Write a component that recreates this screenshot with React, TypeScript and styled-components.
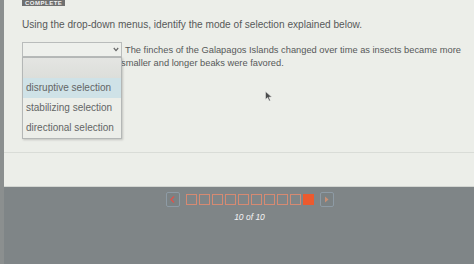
import * as React from 'react'
import styled, { createGlobalStyle } from 'styled-components'

const GlobalStyle = createGlobalStyle`
  html, body {
    margin: 0;
    padding: 0;
    background: #7f8587;
  }
  body {
    font-family: 'Liberation Sans', Arial, sans-serif;
  }
`

const Page = styled('div')`
  display: flex;
  flex-flow: column;
  width: 474px;
  height: 264px;
  overflow: hidden;
  background: #7f8587;
  border-left: 4px solid #8b8f8f;
  box-sizing: border-box;
  position: relative;
`

const Panel = styled('section')`
  display: flex;
  flex-flow: column;
  height: 186px;
  background: #eceee9;
  box-shadow: 0 1px 0 #d3d6d2;
  overflow: hidden;
`

const Content = styled('div')`
  display: flex;
  flex-flow: column;
  align-items: flex-start;
  padding-left: 18px;
  color: #575959;
`

const Badge = styled('div')`
  display: flex;
  align-items: flex-end;
  width: max-content;
  height: 7px;
  margin-top: -1px;
  padding: 0 3px;
  background: #6f7070;
  color: #f2f2f2;
  font-size: 6px;
  font-weight: bold;
  letter-spacing: 0.5px;
  line-height: 6px;
  overflow: hidden;
`

const Instruction = styled('p')`
  margin: 13px 0 0;
  font-size: 10.1px;
  line-height: 12px;
`

const QuestionRow = styled('div')`
  display: flex;
  align-items: flex-start;
  margin-top: 11px;
`

const SelectWrap = styled('div')`
  position: relative;
  flex: 0 0 auto;
  z-index: 2;
`

const SelectBox = styled('div')`
  display: flex;
  align-items: center;
  justify-content: flex-end;
  width: 100px;
  height: 15px;
  box-sizing: border-box;
  padding-right: 2px;
  border: 1px solid #b9bcbb;
  background: #eef0ec;
  color: #666;
`

const OptionList = styled('ul')`
  position: absolute;
  top: 100%;
  left: 0;
  width: 100px;
  margin: 0;
  padding: 0;
  list-style: none;
  box-sizing: border-box;
  border: 1px solid #b4b7b6;
  background: #eceee9;
  box-shadow: 1px 1px 2px rgba(0, 0, 0, 0.18);
`

const Option = styled('li')<{ $active?: boolean; $blank?: boolean }>`
  height: 20px;
  padding-left: 3px;
  font-size: 10px;
  line-height: 20px;
  color: #636565;
  white-space: nowrap;
  background: ${p =>
    p.$active
      ? '#cfe2e7'
      : p.$blank
      ? 'linear-gradient(#e4e5e2, #dcdeda)'
      : 'transparent'};
`

const Prompt = styled('p')`
  margin: 0 0 0 -1px;
  padding-top: 2px;
  font-size: 9.3px;
  line-height: 13px;
  text-indent: 4px;
`

const Divider = styled('div')`
  margin-top: auto;
  margin-bottom: 33px;
  height: 1px;
  background: #d9dcd7;
`

const Footer = styled('footer')`
  display: flex;
  flex-flow: column;
  align-items: center;
  padding-left: 21px;
`

const Nav = styled('nav')`
  display: flex;
  align-items: center;
  gap: 6px;
  margin-top: 6px;
`

const NavButton = styled('button')`
  display: flex;
  align-items: center;
  justify-content: center;
  width: 14px;
  height: 15px;
  padding: 0;
  border: 1px solid #8e9ba5;
  border-radius: 2px;
  background: #7b8284;
  cursor: pointer;
`

const Squares = styled('div')`
  display: flex;
  align-items: center;
  gap: 2px;
`

const Square = styled('span')<{ $current?: boolean }>`
  width: 11px;
  height: 11px;
  box-sizing: border-box;
  border: 1.5px solid ${p => (p.$current ? '#ec5a2e' : '#d68a72')};
  background: ${p => (p.$current ? '#ec5a2e' : 'transparent')};
`

const Counter = styled('div')`
  margin-top: 5px;
  color: #f4f4f4;
  font-size: 8.5px;
  font-style: italic;
  line-height: 10px;
`

const Cursor = styled('svg')`
  position: absolute;
  left: 261px;
  top: 91px;
`

const options = ['disruptive selection', 'stabilizing selection', 'directional selection']

export default function App() {
  return (
    <Page>
      <GlobalStyle />
      <Panel>
        <Content>
          <Badge>COMPLETE</Badge>
          <Instruction>
            Using the drop-down menus, identify the mode of selection explained below.
          </Instruction>
          <QuestionRow>
            <SelectWrap>
              <SelectBox>
                <svg width="6" height="5" viewBox="0 0 6 5">
                  <path d="M0.8 1 L3 3.6 L5.2 1" fill="none" stroke="#666" strokeWidth="1.2" />
                </svg>
              </SelectBox>
              <OptionList>
                <Option $blank />
                {options.map((o, i) => (
                  <Option key={o} $active={i === 0}>
                    {o}
                  </Option>
                ))}
              </OptionList>
            </SelectWrap>
            <Prompt>
              The finches of the Galapagos Islands changed over time as insects became more
              smaller and longer beaks were favored.
            </Prompt>
          </QuestionRow>
        </Content>
        <Divider />
      </Panel>
      <Footer>
        <Nav>
          <NavButton aria-label="previous">
            <svg width="5" height="7" viewBox="0 0 5 7">
              <path d="M4 0.5 L1 3.5 L4 6.5" fill="none" stroke="#e0524a" strokeWidth="1.3" />
            </svg>
          </NavButton>
          <Squares>
            {Array.from({ length: 10 }, (_, i) => (
              <Square key={i} $current={i === 9} />
            ))}
          </Squares>
          <NavButton aria-label="next">
            <svg width="5" height="7" viewBox="0 0 5 7">
              <path d="M1 0.5 L4.5 3.5 L1 6.5 Z" fill="#c98f74" />
            </svg>
          </NavButton>
        </Nav>
        <Counter>10 of 10</Counter>
      </Footer>
      <Cursor width="8" height="11" viewBox="0 0 8 11">
        <path d="M0.5 0.5 L0.5 8.5 L2.6 6.6 L4.2 10 L5.4 9.4 L3.9 6.2 L6.8 6.1 Z" fill="#4a4c4c" stroke="#eee" strokeWidth="0.5" />
      </Cursor>
    </Page>
  )
}
